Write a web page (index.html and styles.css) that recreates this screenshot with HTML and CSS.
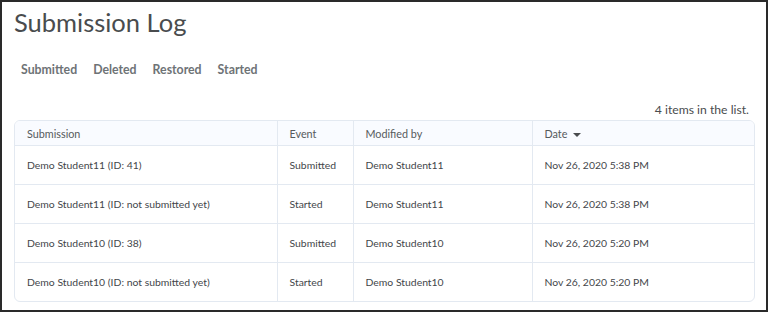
FILE: index.html
```html
<!DOCTYPE html>
<html>
<head>
<meta charset="utf-8">
<link rel="stylesheet" href="styles.css">
</head>
<body>
<div class="frame">
  <h1 class="title">Submission Log</h1>
  <nav class="tabs">
    <span class="tab">Submitted</span>
    <span class="tab">Deleted</span>
    <span class="tab">Restored</span>
    <span class="tab">Started</span>
  </nav>
  <div class="count">4 items in the list.</div>
  <div class="table-wrap">
    <table class="log">
      <colgroup>
        <col class="c1"><col class="c2"><col class="c3"><col class="c4">
      </colgroup>
      <thead>
        <tr>
          <th>Submission</th>
          <th>Event</th>
          <th>Modified by</th>
          <th>Date <span class="caret"></span></th>
        </tr>
      </thead>
      <tbody>
        <tr><td>Demo Student11 (ID: 41)</td><td>Submitted</td><td>Demo Student11</td><td>Nov 26, 2020 5:38 PM</td></tr>
        <tr><td>Demo Student11 (ID: not submitted yet)</td><td>Started</td><td>Demo Student11</td><td>Nov 26, 2020 5:38 PM</td></tr>
        <tr><td>Demo Student10 (ID: 38)</td><td>Submitted</td><td>Demo Student10</td><td>Nov 26, 2020 5:20 PM</td></tr>
        <tr><td>Demo Student10 (ID: not submitted yet)</td><td>Started</td><td>Demo Student10</td><td>Nov 26, 2020 5:20 PM</td></tr>
      </tbody>
    </table>
  </div>
</div>
</body>
</html>
```
FILE: styles.css
```css
html, body { margin: 0; padding: 0; background: #fff; }
body { font-family: Lato, "Open Sans", "Liberation Sans", sans-serif; color: #494c4e; }
.frame {
  box-sizing: border-box;
  width: 768px;
  height: 312px;
  border: 2px solid #2a2a2a;
  padding: 0 10px 0 12px;
}
.title {
  margin: 0;
  padding-top: 4px;
  font-size: 25.5px;
  font-weight: 400;
  line-height: 32px;
  color: #494c4e;
}
.tabs {
  display: flex;
  gap: 16px;
  padding-left: 7px;
  margin-top: 22px;
  height: 18px;
  align-items: center;
}
.tab { font-size: 12.3px; font-weight: 700; color: #6e7376; }
.count {
  text-align: right;
  font-size: 12.2px;
  margin-top: 23px;
  padding-right: 7px;
  line-height: 18px;
}
.table-wrap {
  margin-top: 1px;
  border: 1px solid #e3e9f1;
  border-radius: 6px;
  overflow: hidden;
  width: 741px;
  box-sizing: border-box;
}
.log { width: 100%; border-collapse: collapse; table-layout: fixed; }
.c1 { width: 262px; } .c2 { width: 76px; } .c3 { width: 179px; } .c4 { width: auto; }
.log th {
  background: #f9fbff;
  font-size: 10.8px;
  font-weight: 400;
  color: #565a5c;
  text-align: left;
  height: 24px;
  padding: 0 0 0 12px;
  border-bottom: 1px solid #e3e9f1;
  border-left: 1px solid #e3e9f1;
}
.log td {
  font-size: 10.4px;
  color: #43464a;
  height: 38px;
  padding: 0 0 0 12px;
  border-top: 1px solid #e3e9f1;
  border-left: 1px solid #e3e9f1;
}
.log th:first-child, .log td:first-child { border-left: none; }
.log tbody tr:first-child td { border-top: none; }
.caret {
  display: inline-block;
  width: 0; height: 0;
  border-left: 4px solid transparent;
  border-right: 4px solid transparent;
  border-top: 4px solid #494c4e;
  vertical-align: middle;
  margin-left: 3px;
}
```
